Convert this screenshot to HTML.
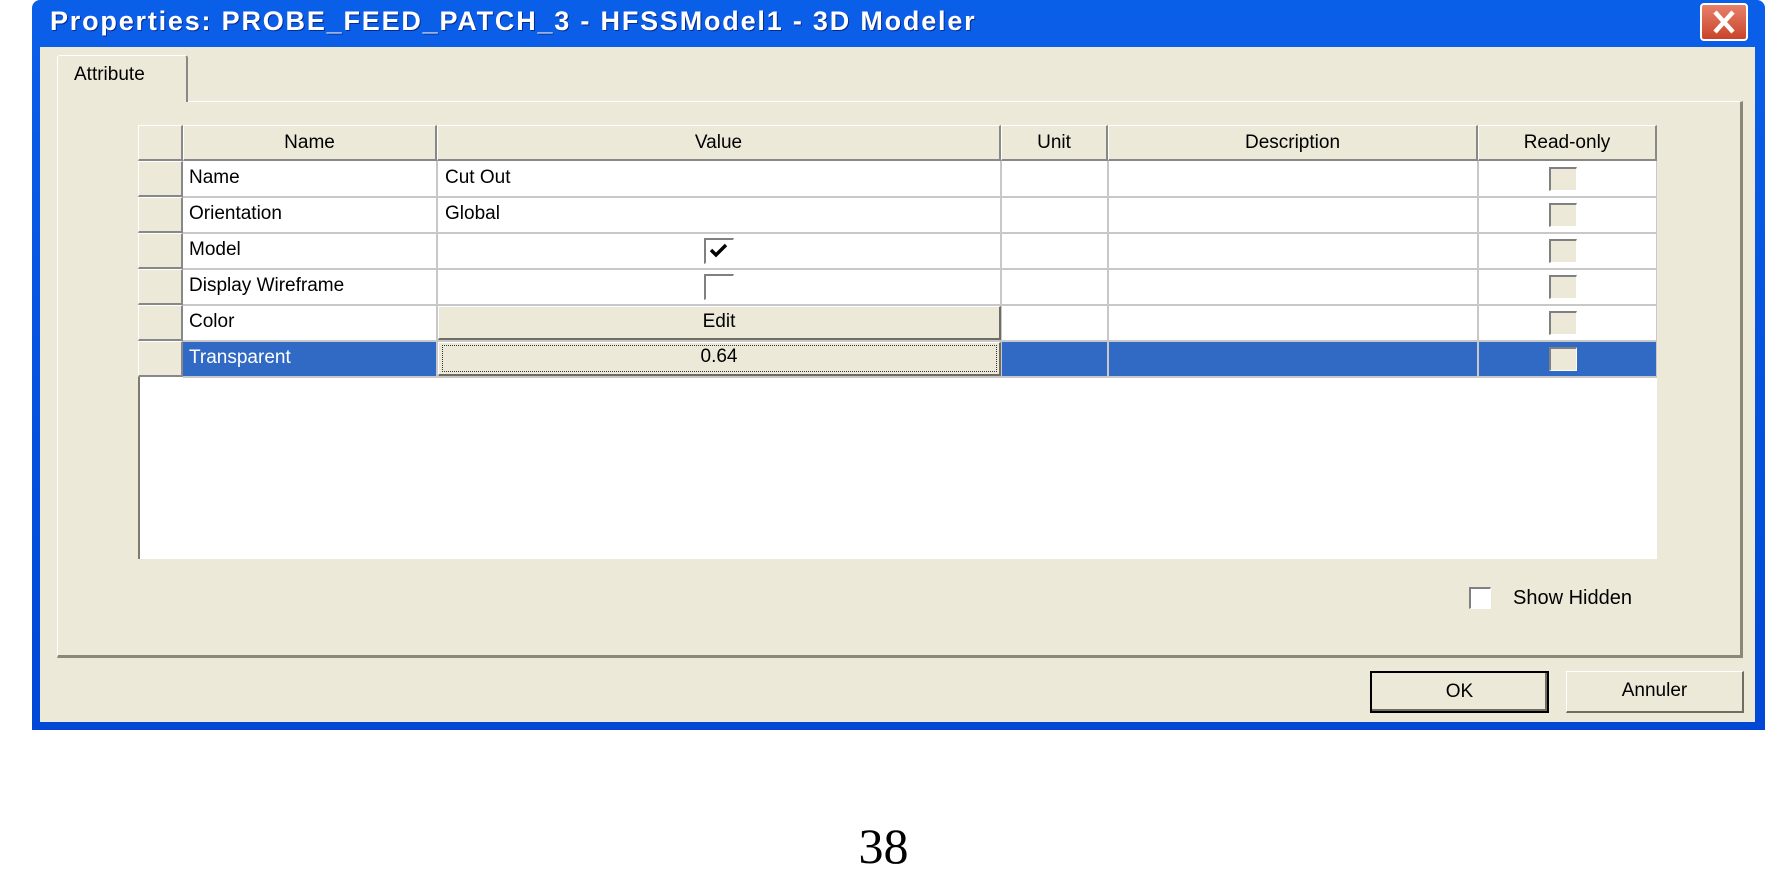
<!DOCTYPE html>
<html><head><meta charset="utf-8"><style>
*{box-sizing:border-box;margin:0;padding:0}
body{width:1789px;height:869px;background:#fff;position:relative;overflow:hidden;font-family:"Liberation Sans",sans-serif}
.abs{position:absolute}
#win{left:32px;top:0;width:1733px;height:730px;background:linear-gradient(#0A5FE8,#0047D6);border-radius:8px 8px 0 0}
#title{left:50px;top:6px;color:#fff;font-weight:bold;font-size:27px;letter-spacing:1.8px;text-shadow:1px 1px #0a2a8a}
#close{left:1700px;top:3px;width:48px;height:38px;background:linear-gradient(#E8806A,#C8452A);border:2px solid #fff;border-radius:4px}
#body{left:40px;top:47px;width:1715px;height:675px;background:#ECE9D8}
#tab{left:57px;top:55px;width:131px;height:47px;border:1px solid #fff;border-right:2px solid #888;border-bottom:none;background:#ECE9D8;font-size:19px;padding:8px 0 0 16px;border-radius:3px 3px 0 0;z-index:2}
#panel{left:57px;top:101px;width:1686px;height:557px;border-top:1px solid #fff;border-left:1px solid #fff;border-right:3px solid #8a8878;border-bottom:3px solid #8a8878}
#grid{left:138px;top:125px;width:1519px;height:434px;background:#fff;border-left:2px solid #7d7b70;border-top:2px solid #7d7b70}
.cell{position:absolute;font-size:19px;color:#000;white-space:nowrap}
.hdr{background:#ECE9D8;border-right:2px solid #888;border-bottom:2px solid #888;text-align:center;line-height:33px;border-left:1px solid #fff;border-top:1px solid #fff}
.line{position:absolute;background:#c8c8c8}
.rh{position:absolute;left:138px;width:45px;height:36px;background:#ECE9D8;border-right:2px solid #888;border-bottom:2px solid #888;border-top:1px solid #fff;border-left:1px solid #fff}
.cb{position:absolute;width:28px;height:24px;background:#ECE9D8;border-top:2px solid #808080;border-left:2px solid #808080;border-right:1px solid #fff;border-bottom:1px solid #fff}
.cbw{background:#fff;width:30px;height:26px}
.btn{position:absolute;background:#ECE9D8;border-top:1px solid #fff;border-left:1px solid #fff;border-right:2px solid #6f6d62;border-bottom:2px solid #6f6d62;font-size:19px;text-align:center}
</style></head><body>
<div id="win" class="abs"></div>
<div id="title" class="abs">Properties: PROBE_FEED_PATCH_3 - HFSSModel1 - 3D Modeler</div>
<div id="close" class="abs"><svg width="44" height="34" viewBox="0 0 44 34"><path d="M13 7 L31 27 M31 7 L13 27" stroke="#fff" stroke-width="4.5"/></svg></div>
<div id="body" class="abs"></div>
<div id="panel" class="abs"></div>
<div id="tab" class="abs">Attribute</div>
<div id="grid" class="abs"></div>

<div class="rh" style="top:125px"></div>
<div class="cell hdr" style="left:183px;top:125px;width:254px;height:36px">Name</div>
<div class="cell hdr" style="left:437px;top:125px;width:564px;height:36px">Value</div>
<div class="cell hdr" style="left:1001px;top:125px;width:107px;height:36px">Unit</div>
<div class="cell hdr" style="left:1108px;top:125px;width:370px;height:36px">Description</div>
<div class="cell hdr" style="left:1478px;top:125px;width:179px;height:36px">Read-only</div>

<div class="rh" style="top:161px"></div>
<div class="rh" style="top:197px"></div>
<div class="rh" style="top:233px"></div>
<div class="rh" style="top:269px"></div>
<div class="rh" style="top:305px"></div>
<div class="rh" style="top:341px"></div>

<div class="abs" style="left:183px;top:341px;width:1474px;height:36px;background:#316AC5"></div>

<div class="line" style="left:183px;top:196px;width:1474px;height:2px"></div>
<div class="line" style="left:183px;top:232px;width:1474px;height:2px"></div>
<div class="line" style="left:183px;top:268px;width:1474px;height:2px"></div>
<div class="line" style="left:183px;top:304px;width:1474px;height:2px"></div>
<div class="line" style="left:183px;top:340px;width:1474px;height:2px"></div>
<div class="line" style="left:183px;top:376px;width:1474px;height:2px"></div>
<div class="line" style="left:436px;top:161px;width:2px;height:216px"></div>
<div class="line" style="left:1000px;top:161px;width:2px;height:216px"></div>
<div class="line" style="left:1107px;top:161px;width:2px;height:216px"></div>
<div class="line" style="left:1477px;top:161px;width:2px;height:216px"></div>
<div class="line" style="left:1656px;top:161px;width:1px;height:216px"></div>

<div class="cell" style="left:189px;top:167px">Name</div>
<div class="cell" style="left:189px;top:203px">Orientation</div>
<div class="cell" style="left:189px;top:239px">Model</div>
<div class="cell" style="left:189px;top:275px">Display Wireframe</div>
<div class="cell" style="left:189px;top:311px">Color</div>
<div class="cell" style="left:189px;top:347px;color:#fff">Transparent</div>

<div class="cell" style="left:445px;top:167px">Cut Out</div>
<div class="cell" style="left:445px;top:203px">Global</div>
<div class="cb cbw" style="left:704px;top:238px"><svg width="26" height="22" viewBox="0 0 26 22"><path d="M5 10 L10 15 L20 5" stroke="#000" stroke-width="3.4" fill="none"/></svg></div>
<div class="cb cbw" style="left:704px;top:274px"></div>
<div class="btn" style="left:438px;top:306px;width:563px;height:34px;line-height:30px">Edit</div>
<div class="btn" style="left:438px;top:342px;width:563px;height:34px;line-height:28px"><div style="position:absolute;left:3px;top:2px;right:2px;bottom:2px;border:1px dotted #333"></div>0.64</div>

<div class="cb" style="left:1549px;top:167px"></div>
<div class="cb" style="left:1549px;top:203px"></div>
<div class="cb" style="left:1549px;top:239px"></div>
<div class="cb" style="left:1549px;top:275px"></div>
<div class="cb" style="left:1549px;top:311px"></div>
<div class="cb" style="left:1549px;top:347px"></div>

<div class="cb cbw" style="left:1469px;top:587px;width:22px;height:22px"></div>
<div class="cell" style="left:1513px;top:587px;font-size:20px">Show Hidden</div>

<div class="btn" style="left:1370px;top:671px;width:179px;height:42px;line-height:38px;border:2px solid #000;box-shadow:inset -2px -2px #6f6d62">OK</div>
<div class="btn" style="left:1566px;top:671px;width:178px;height:42px;line-height:38px">Annuler</div>

<div class="abs" style="left:0;width:1789px;text-align:center;top:817px;font-family:'Liberation Serif',serif;font-size:50px"><span style="position:relative;left:-11px">38</span></div>
</body></html>
